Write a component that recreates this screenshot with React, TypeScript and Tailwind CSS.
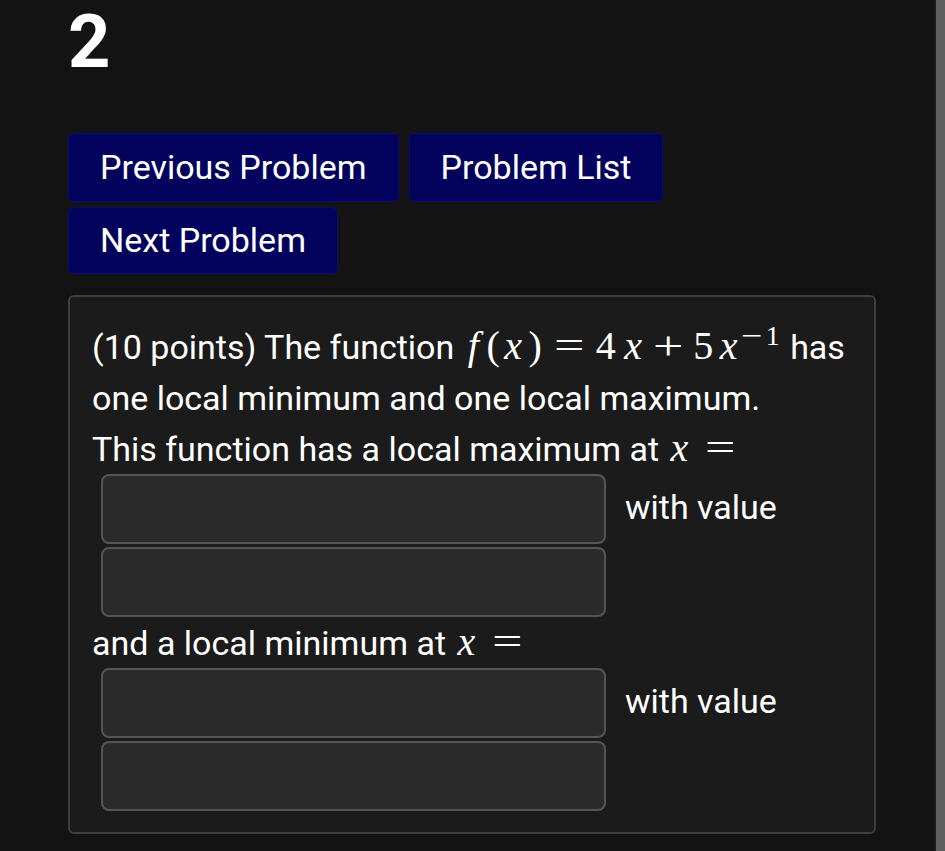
import React from 'react';

const roboto = { fontFamily: 'Roboto, "Noto Sans", sans-serif' };

// one math glyph in a fixed-width cell, so the spacing follows the typeset formula
function G({ w, children, italic, wide }: { w: number; children: React.ReactNode; italic?: boolean; wide?: boolean }) {
  return (
    <span
      className={`inline-block text-center ${italic ? 'italic' : ''}`}
      style={{ width: w }}
    >
      <span className={wide ? 'inline-block scale-x-[1.35]' : ''}>{children}</span>
    </span>
  );
}

function XEquals() {
  return (
    <span className="whitespace-nowrap font-['Liberation_Serif',serif] text-[40px]">
      <G w={24} italic>x</G>
      <span className="ml-[6px]" />
      <G w={46} wide>=</G>
    </span>
  );
}

function AnswerPair() {
  return (
    <div className="flex items-start">
      <div className="ml-[9px] flex flex-col gap-[3px]">
        <input className="w-[505px] h-[70px] rounded-[8px] border-2 border-[#555] bg-[#2a2a2a] outline-none" />
        <input className="w-[505px] h-[70px] rounded-[8px] border-2 border-[#555] bg-[#2a2a2a] outline-none" />
      </div>
      <span className="ml-[19px] mt-[9px]">with value</span>
    </div>
  );
}

export default function App() {
  return (
    <div className="flex min-h-[851px] bg-[#131313] text-white" style={roboto}>
      <div className="flex-1 pl-[68px] pr-[58px]">
        <h1 className="pt-[2px] text-[74px] font-bold leading-[80px]">2</h1>

        <div className="mt-[51px] flex flex-wrap gap-x-[10px] gap-y-[5px]">
          <button className="h-[69px] px-[31px] rounded-[6px] border border-[#0d0d70] bg-[#03035e] text-[34px]">
            Previous Problem
          </button>
          <button className="h-[69px] px-[31px] rounded-[6px] border border-[#0d0d70] bg-[#03035e] text-[34px]">
            Problem List
          </button>
          <button className="h-[67px] px-[31px] rounded-[6px] border border-[#0d0d70] bg-[#03035e] text-[34px]">
            Next Problem
          </button>
        </div>

        <div className="mt-[21px] rounded-[6px] border-2 border-[#3f3f3f] bg-[#1b1b1b] px-[22px] pt-[24px] pb-[21px] text-[34px] leading-[49px]">
          <p>
            (10 points) The function{' '}
            <span className="whitespace-nowrap">
              <span className="font-['Liberation_Serif',serif] text-[40px]">
                <G w={21} italic>f</G>
                <G w={19}>(</G>
                <G w={21} italic>x</G>
                <G w={23}>)</G>
                <G w={45} wide>=</G>
                <G w={28}>4</G>
                <G w={27} italic>x</G>
                <G w={43} wide>+</G>
                <G w={27}>5</G>
                <G w={24} italic>x</G>
                <span className="relative -top-[14px] text-[28px]">
                  <G w={23} wide>−</G>
                  <G w={18}>1</G>
                </span>
              </span>{' '}
              has
            </span>
            <br />
            one local minimum and one local maximum.
            <br />
            This function has a local maximum at <XEquals />
          </p>
          <AnswerPair />
          <p>
            and a local minimum at <XEquals />
          </p>
          <AnswerPair />
        </div>
      </div>
      <div className="w-[2px] bg-[#1c1c1c]" />
      <div className="w-[9px] bg-[#5f5f5f]" />
    </div>
  );
}
